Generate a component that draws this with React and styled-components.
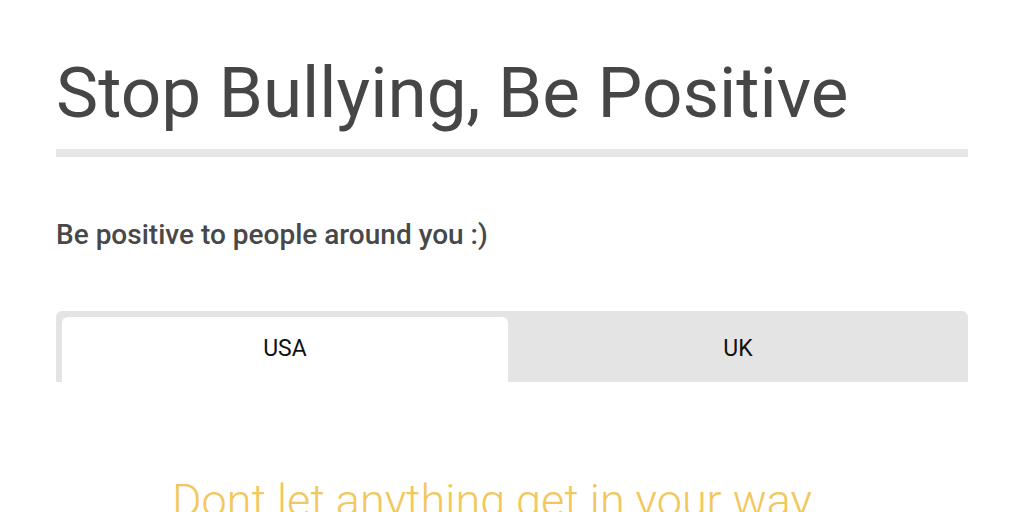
import React, { useState } from "react";
import styled, { createGlobalStyle } from "styled-components";

const GlobalStyle = createGlobalStyle`
  body {
    margin: 0;
    background: #fff;
    font-family: Roboto, "Liberation Sans", sans-serif;
  }
`;

const tabs = [
  { id: "usa", label: "USA", message: "Dont let anything get in your way" },
  { id: "uk", label: "UK", message: "Keep calm and be kind" },
];

function App() {
  const [active, setActive] = useState("usa");
  const current = tabs.find((t) => t.id === active);

  return (
    <Page>
      <GlobalStyle />
      <Title>Stop Bullying, Be Positive</Title>
      <Divider />
      <Subtitle>Be positive to people around you :)</Subtitle>
      <TabBar>
        {tabs.map((tab) => (
          <Tab
            key={tab.id}
            $active={tab.id === active}
            onClick={() => setActive(tab.id)}
          >
            {tab.label}
          </Tab>
        ))}
      </TabBar>
      <Panel>
        <Message>{current.message}</Message>
      </Panel>
    </Page>
  );
}

const Page = styled.div`
  padding: 0 56px;
  display: flex;
  flex-direction: column;
`;

const Title = styled.h1`
  margin: 50px 0 0;
  font-size: 71px;
  font-weight: 400;
  line-height: 86px;
  color: #464646;
`;

const Divider = styled.div`
  height: 8px;
  margin-top: 13px;
  background: #e6e6e6;
`;

const Subtitle = styled.p`
  margin: 62px 0 0;
  font-size: 28px;
  font-weight: 500;
  line-height: 32px;
  color: #484848;
`;

const TabBar = styled.div`
  margin-top: 60px;
  display: grid;
  grid-template-columns: 446px 1fr;
  padding: 6px 0 0 6px;
  background: #e4e4e4;
  border-radius: 6px 6px 0 0;
`;

const Tab = styled.button`
  height: 65px;
  border: none;
  border-radius: 6px 6px 0 0;
  background: ${(p) => (p.$active ? "#fff" : "transparent")};
  font-family: Roboto, "Liberation Sans", sans-serif;
  font-size: 23px;
  color: #111;
  cursor: pointer;
  padding: 0 0 2px;
`;

const Panel = styled.div`
  display: flex;
  justify-content: center;
  padding-top: 94px;
  padding-right: 40px;
`;

const Message = styled.p`
  margin: 0;
  font-size: 45px;
  font-weight: 300;
  line-height: 50px;
  color: #f2c75c;
`;

export default App;
